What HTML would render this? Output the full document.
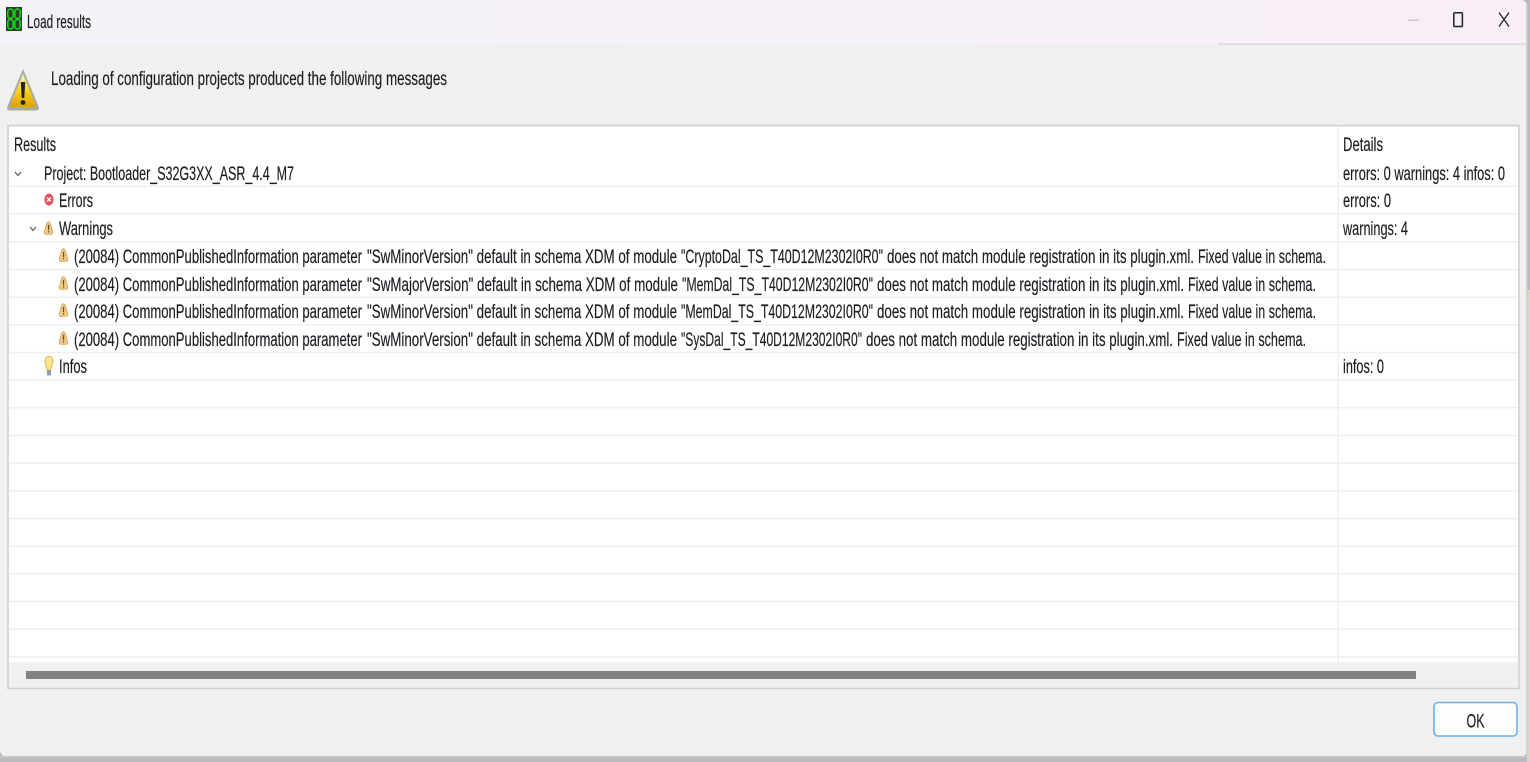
<!DOCTYPE html>
<html><head><meta charset="utf-8"><title>Load results</title>
<style>
html,body{margin:0;padding:0;width:1530px;height:762px;overflow:hidden;background:#b9bbc0}
svg{display:block}
text{font-family:"Liberation Sans",sans-serif;fill:#1d1f24;stroke:#1d1f24;stroke-width:0.18px;font-size:19px;transform:translateY(0.8px)}
.b{filter:url(#s)}
</style></head><body>
<svg width="1530" height="762" viewBox="0 0 1530 762" xmlns="http://www.w3.org/2000/svg">
<defs>
<filter id="s" x="-2%" y="-2%" width="104%" height="104%"><feGaussianBlur stdDeviation="0.33"/></filter>
<linearGradient id="tb" x1="0" x2="1" y1="0" y2="0"><stop offset="0" stop-color="#f3f2f8"/><stop offset="0.5" stop-color="#f6f0f8"/><stop offset="1" stop-color="#f8eef8"/></linearGradient>
<linearGradient id="tri" x1="0" x2="0" y1="0" y2="1"><stop offset="0" stop-color="#fff6c0"/><stop offset="0.45" stop-color="#f8d820"/><stop offset="1" stop-color="#e2a200"/></linearGradient>
<g id="w"><path d="M4.500 0.700 C5.800 0.700 6.200 2.500 6.700 4 L8.600 11 Q9 13.300 7 13.300 L2 13.300 Q0 13.300 0.400 11 L2.300 4 C2.800 2.500 3.200 0.700 4.500 0.700 Z" fill="#f5cf85" stroke="#d2a65e" stroke-width="1"/><rect x="3.900" y="3.800" width="1.300" height="5.400" fill="#66502a"/><rect x="3.900" y="10" width="1.300" height="1.500" fill="#66502a"/></g>
</defs>
<rect x="0" y="0" width="1530" height="762" fill="#b9bbc0"/>
<rect x="1527" y="290" width="3" height="472" fill="#d8d8c8"/>
<rect x="0" y="0" width="1527" height="757" rx="7" fill="#f0f0f0"/>
<path d="M0 0H1520Q1527 0 1527 7V44H0Z" fill="url(#tb)"/>
<rect x="1218" y="43.500" width="309" height="1.500" fill="#dcdcdc"/>
<rect x="0" y="756" width="1527" height="1.500" fill="#c9c9c9"/>
<rect x="1526" y="5" width="1.500" height="750" fill="#d0d0d0"/>

<g class="b">
<rect x="6" y="7" width="16" height="24" fill="#2f3a2f"/>
<g fill="none" stroke="#14dc14" stroke-width="1.500"><rect x="7.800" y="9" width="5.400" height="9.500" rx="2.700"/><rect x="14.800" y="9" width="5.400" height="9.500" rx="2.700"/><rect x="7.800" y="19.500" width="5.400" height="9.500" rx="2.700"/><rect x="14.800" y="19.500" width="5.400" height="9.500" rx="2.700"/></g>
<text x="27" y="27" style="font-size:18px" textLength="64" lengthAdjust="spacingAndGlyphs">Load results</text>

<path d="M23 69 L38.800 107 Q39.500 110.500 36 110.500 L10 110.500 Q6.500 110.500 7.200 107 Z" fill="#a9a9a9"/>
<path d="M23 74 L36.500 107 L9.500 107 Z" fill="url(#tri)"/>
<path d="M20.800 82 H25.200 L24.300 98 H21.700 Z" fill="#222"/>
<circle cx="23" cy="102.500" r="2.400" fill="#222"/>
<text x="51" y="84" textLength="396" lengthAdjust="spacingAndGlyphs">Loading of configuration projects produced the following messages</text>

<rect x="1408" y="19.500" width="11" height="1.300" fill="#c4bcc6"/>
<rect x="1453.800" y="12.800" width="8.600" height="13.700" rx="1" fill="none" stroke="#222" stroke-width="1.500"/>
<path d="M1499 12.500 L1509 26.500 M1509 12.500 L1499 26.500" stroke="#222" stroke-width="1.300" fill="none"/>

<rect x="8" y="125.500" width="1511" height="563" fill="#f0f0f0" stroke="#cfcfcf" stroke-width="1.500"/>
<rect x="9" y="127" width="1509" height="535" fill="#fff"/>
<g fill="#efefef">
<rect x="9" y="185.500" width="1509" height="1.500"/>
<rect x="9" y="213" width="1509" height="1.500"/>
<rect x="9" y="241" width="1509" height="1.500"/>
<rect x="9" y="268.700" width="1509" height="1.500"/>
<rect x="9" y="296.400" width="1509" height="1.500"/>
<rect x="9" y="324" width="1509" height="1.500"/>
<rect x="9" y="351.800" width="1509" height="1.500"/>
<rect x="9" y="379.500" width="1509" height="1.500"/>
<rect x="9" y="407" width="1509" height="1.500"/>
<rect x="9" y="434.800" width="1509" height="1.500"/>
<rect x="9" y="462.500" width="1509" height="1.500"/>
<rect x="9" y="490" width="1509" height="1.500"/>
<rect x="9" y="517.800" width="1509" height="1.500"/>
<rect x="9" y="545.500" width="1509" height="1.500"/>
<rect x="9" y="573" width="1509" height="1.500"/>
<rect x="9" y="600.800" width="1509" height="1.500"/>
<rect x="9" y="628.500" width="1509" height="1.500"/>
<rect x="9" y="656" width="1509" height="1.500"/>
<rect x="1337.500" y="127" width="1.500" height="535"/>
</g>
<rect x="26" y="671" width="1390" height="8" fill="#828282"/>

<text x="14" y="150" textLength="42" lengthAdjust="spacingAndGlyphs">Results</text>
<text x="1343" y="150" textLength="40" lengthAdjust="spacingAndGlyphs">Details</text>

<path d="M15 172 L18 175.500 L21 172" fill="none" stroke="#555" stroke-width="1.200"/>
<text x="44" y="179" textLength="250" lengthAdjust="spacingAndGlyphs">Project: Bootloader_S32G3XX_ASR_4.4_M7</text>
<text x="1343" y="179" textLength="162" lengthAdjust="spacingAndGlyphs">errors: 0 warnings: 4 infos: 0</text>

<ellipse cx="49" cy="199.500" rx="4.600" ry="6" fill="#e4505f"/>
<path d="M47 197.500 L51 201.500 M51 197.500 L47 201.500" stroke="#fff" stroke-width="1.300"/>
<text x="59" y="206" textLength="34" lengthAdjust="spacingAndGlyphs">Errors</text>
<text x="1343" y="206" textLength="48" lengthAdjust="spacingAndGlyphs">errors: 0</text>

<path d="M30 227 L33 230.500 L36 227" fill="none" stroke="#555" stroke-width="1.200"/>
<use href="#w" x="44" y="221"/>
<text x="59" y="234" textLength="54" lengthAdjust="spacingAndGlyphs">Warnings</text>
<text x="1343" y="234" textLength="65" lengthAdjust="spacingAndGlyphs">warnings: 4</text>

<use href="#w" x="59" y="248"/>
<text x="74" y="262" textLength="288" lengthAdjust="spacingAndGlyphs">(20084) CommonPublishedInformation parameter</text>
<text x="367" y="262" textLength="310" lengthAdjust="spacingAndGlyphs">"SwMinorVersion" default in schema XDM of module</text>
<text x="681" y="262" textLength="202" lengthAdjust="spacingAndGlyphs">"CryptoDal_TS_T40D12M2302I0R0"</text>
<text x="887" y="262" textLength="307" lengthAdjust="spacingAndGlyphs">does not match module registration in its plugin.xml.</text>
<text x="1198" y="262" textLength="128" lengthAdjust="spacingAndGlyphs">Fixed value in schema.</text>

<use href="#w" x="59" y="276"/>
<text x="74" y="290" textLength="288" lengthAdjust="spacingAndGlyphs">(20084) CommonPublishedInformation parameter</text>
<text x="367" y="290" textLength="311" lengthAdjust="spacingAndGlyphs">"SwMajorVersion" default in schema XDM of module</text>
<text x="682" y="290" textLength="191" lengthAdjust="spacingAndGlyphs">"MemDal_TS_T40D12M2302I0R0"</text>
<text x="877" y="290" textLength="307" lengthAdjust="spacingAndGlyphs">does not match module registration in its plugin.xml.</text>
<text x="1188" y="290" textLength="128" lengthAdjust="spacingAndGlyphs">Fixed value in schema.</text>

<use href="#w" x="59" y="303"/>
<text x="74" y="317" textLength="288" lengthAdjust="spacingAndGlyphs">(20084) CommonPublishedInformation parameter</text>
<text x="367" y="317" textLength="310" lengthAdjust="spacingAndGlyphs">"SwMinorVersion" default in schema XDM of module</text>
<text x="681" y="317" textLength="192" lengthAdjust="spacingAndGlyphs">"MemDal_TS_T40D12M2302I0R0"</text>
<text x="877" y="317" textLength="307" lengthAdjust="spacingAndGlyphs">does not match module registration in its plugin.xml.</text>
<text x="1188" y="317" textLength="128" lengthAdjust="spacingAndGlyphs">Fixed value in schema.</text>

<use href="#w" x="59" y="331"/>
<text x="74" y="345" textLength="288" lengthAdjust="spacingAndGlyphs">(20084) CommonPublishedInformation parameter</text>
<text x="367" y="345" textLength="310" lengthAdjust="spacingAndGlyphs">"SwMinorVersion" default in schema XDM of module</text>
<text x="681" y="345" textLength="181" lengthAdjust="spacingAndGlyphs">"SysDal_TS_T40D12M2302I0R0"</text>
<text x="866" y="345" textLength="307" lengthAdjust="spacingAndGlyphs">does not match module registration in its plugin.xml.</text>
<text x="1177" y="345" textLength="129" lengthAdjust="spacingAndGlyphs">Fixed value in schema.</text>

<path d="M49 356.500 C45.500 356.500 45 360 45 361.500 C45 365 47 366.500 47 370 H51 C51 366.500 53 365 53 361.500 C53 360 52.500 356.500 49 356.500 Z" fill="#fbe58e" stroke="#e3b64c" stroke-width="1"/>
<rect x="47" y="370" width="4" height="5.500" fill="#8ba0b4"/>
<text x="59" y="372" textLength="28" lengthAdjust="spacingAndGlyphs">Infos</text>
<text x="1343" y="372" textLength="41" lengthAdjust="spacingAndGlyphs">infos: 0</text>

<rect x="1434" y="702.500" width="83" height="33.500" rx="4" fill="#fdfdfd" stroke="#6cb0e6" stroke-width="1.600"/>
<text x="1466.500" y="726.500" textLength="18" lengthAdjust="spacingAndGlyphs">OK</text>
</g>
</svg>
</body></html>
